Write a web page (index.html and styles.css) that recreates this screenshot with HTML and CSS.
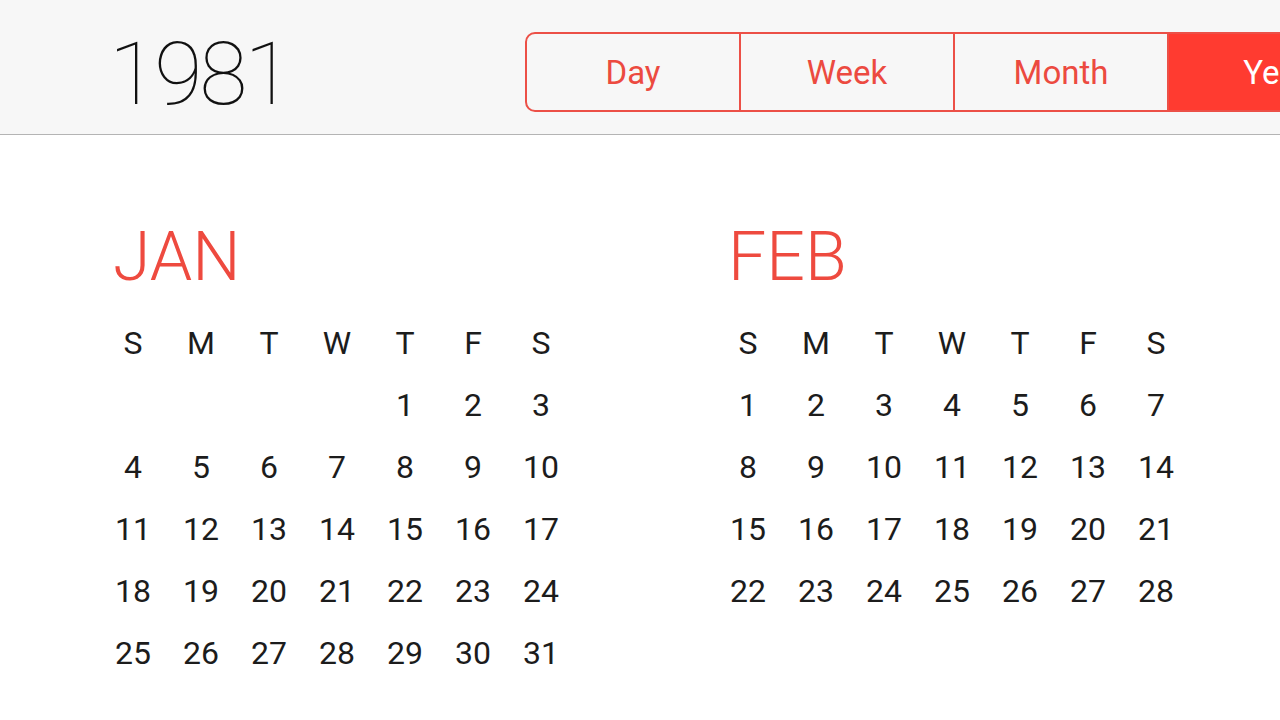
FILE: index.html
```html
<!DOCTYPE html>
<html lang="en">
<head>
  <meta charset="UTF-8">
  <title>Calendar - 1981</title>
  <meta name="viewport" content="width=device-width, initial-scale=1">
  <link rel="stylesheet" href="styles.css">
</head>
<body>
  <header class="topbar">
    <h1 class="year">1981</h1>
    <nav class="segments">
      <div class="seg">Day</div>
      <div class="seg">Week</div>
      <div class="seg">Month</div>
      <div class="seg active">Year</div>
    </nav>
  </header>

  <main class="months">
    <!-- January 1981 starts on Thursday -->
    <section class="month">
      <h2 class="month-name">JAN</h2>
      <div class="grid">
        <div class="wd">S</div><div class="wd">M</div><div class="wd">T</div><div class="wd">W</div><div class="wd">T</div><div class="wd">F</div><div class="wd">S</div>
        <div></div><div></div><div></div><div></div><div>1</div><div>2</div><div>3</div>
        <div>4</div><div>5</div><div>6</div><div>7</div><div>8</div><div>9</div><div>10</div>
        <div>11</div><div>12</div><div>13</div><div>14</div><div>15</div><div>16</div><div>17</div>
        <div>18</div><div>19</div><div>20</div><div>21</div><div>22</div><div>23</div><div>24</div>
        <div>25</div><div>26</div><div>27</div><div>28</div><div>29</div><div>30</div><div>31</div>
      </div>
    </section>

    <!-- February 1981 starts on Sunday -->
    <section class="month">
      <h2 class="month-name">FEB</h2>
      <div class="grid">
        <div class="wd">S</div><div class="wd">M</div><div class="wd">T</div><div class="wd">W</div><div class="wd">T</div><div class="wd">F</div><div class="wd">S</div>
        <div>1</div><div>2</div><div>3</div><div>4</div><div>5</div><div>6</div><div>7</div>
        <div>8</div><div>9</div><div>10</div><div>11</div><div>12</div><div>13</div><div>14</div>
        <div>15</div><div>16</div><div>17</div><div>18</div><div>19</div><div>20</div><div>21</div>
        <div>22</div><div>23</div><div>24</div><div>25</div><div>26</div><div>27</div><div>28</div>
      </div>
    </section>
  </main>
</body>
</html>
```

FILE: styles.css
```css
/* 基本設定 */
* {
  box-sizing: border-box;
  margin: 0;
  padding: 0;
}
body {
  font-family: Roboto, "Liberation Sans", Arial, sans-serif;
  background: #fff;
  color: #1c1c1c;
  overflow: hidden;
  height: 720px;
}

/* 上部バー */
.topbar {
  display: flex;
  align-items: flex-start;
  height: 135px;
  padding-top: 32px;
  background: #f7f7f7;
  border-bottom: 1px solid #b4b4b4;
}
.year {
  flex: 0 0 525px;
  padding-left: 109px;
  font-size: 88px;
  font-weight: 100;
  line-height: 84px;
  letter-spacing: -3px;
  color: #111;
}
.segments {
  display: flex;
  flex-shrink: 0;
  height: 80px;
  border: 2px solid #ec5047;
  border-radius: 10px;
  overflow: hidden;
}
.seg {
  width: 214px;
  display: flex;
  align-items: center;
  justify-content: center;
  font-size: 33px;
  color: #ec4a40;
  border-right: 2px solid #ec5047;
}
.seg.active {
  background: #ff3b30;
  color: #fff;
  border-right: none;
}

/* 月の一覧 */
.months {
  display: flex;
  gap: 139px;
  padding-left: 99px;
}
.month {
  width: 476px;
}
.month-name {
  margin-top: 88px;
  padding-left: 14px;
  font-size: 68px;
  font-weight: 300;
  line-height: 1;
  color: #ee4a3f;
}
.grid {
  display: grid;
  grid-template-columns: repeat(7, 68px);
  grid-auto-rows: 62px;
  margin-top: 21px;
  font-size: 32px;
  line-height: 62px;
  text-align: center;
}
.wd {
  color: #1c1c1c;
}
```
